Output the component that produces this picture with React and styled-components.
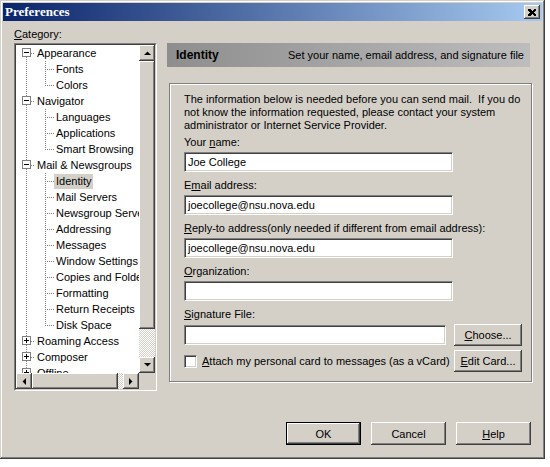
import React from "react";
import styled, { createGlobalStyle } from "styled-components";

const GlobalStyle = createGlobalStyle`
  html, body {
    margin: 0;
    padding: 0;
    background: #ffffff;
  }
  body {
    font-family: "Liberation Sans", Arial, sans-serif;
    font-size: 11px;
    color: #000000;
  }
`;

const treeItems = [
  { label: "Appearance", level: 0, open: true, first: true },
  { label: "Fonts", level: 1 },
  { label: "Colors", level: 1, last: true },
  { label: "Navigator", level: 0, open: true },
  { label: "Languages", level: 1 },
  { label: "Applications", level: 1 },
  { label: "Smart Browsing", level: 1, last: true },
  { label: "Mail & Newsgroups", level: 0, open: true },
  { label: "Identity", level: 1, selected: true },
  { label: "Mail Servers", level: 1 },
  { label: "Newsgroup Servers", level: 1 },
  { label: "Addressing", level: 1 },
  { label: "Messages", level: 1 },
  { label: "Window Settings", level: 1 },
  { label: "Copies and Folders", level: 1 },
  { label: "Formatting", level: 1 },
  { label: "Return Receipts", level: 1 },
  { label: "Disk Space", level: 1, last: true },
  { label: "Roaming Access", level: 0 },
  { label: "Composer", level: 0 },
  { label: "Offline", level: 0 },
];

const DOT = { stroke: "#808080", strokeDasharray: "1 1" };

const TreeGlyph = ({ level, first, last, open }) => {
  if (level) {
    return (
      <svg width={38} height={16} shapeRendering="crispEdges">
        <line x1={10.5} y1={0} x2={10.5} y2={16} {...DOT} />
        <line x1={29.5} y1={0} x2={29.5} y2={last ? 9 : 16} {...DOT} />
        <line x1={31} y1={8.5} x2={38} y2={8.5} {...DOT} />
      </svg>
    );
  }
  return (
    <svg width={19} height={16} shapeRendering="crispEdges">
      <line x1={10.5} y1={first ? 8 : 0} x2={10.5} y2={16} {...DOT} />
      <line x1={15} y1={8.5} x2={19} y2={8.5} {...DOT} />
      <rect x={6.5} y={3.5} width={8} height={8} fill="#fff" stroke="#808080" />
      <line x1={8} y1={7.5} x2={13} y2={7.5} stroke="#000" />
      {!open && <line x1={10.5} y1={5} x2={10.5} y2={10} stroke="#000" />}
    </svg>
  );
};

const Arrow = ({ dir }) => {
  const pts = {
    up: "0,4 7,4 3.5,0.5",
    down: "0,0 7,0 3.5,3.5",
    left: "4,0 4,7 0.5,3.5",
    right: "0,0 0,7 3.5,3.5",
  }[dir];
  const vertical = dir === "up" || dir === "down";
  return (
    <svg width={vertical ? 7 : 4} height={vertical ? 4 : 7}>
      <polygon points={pts} fill="#000" />
    </svg>
  );
};

const CloseGlyph = () => (
  <svg width={8} height={7} shapeRendering="crispEdges">
    <path d="M0 0h2l2 2 2-2h2v1l-2 2.5 2 2.5v1h-2l-2-2-2 2h-2v-1l2-2.5-2-2.5z" fill="#000" />
  </svg>
);

export default function App() {
  return (
    <>
      <GlobalStyle />
      <Window>
        <TitleBar>
          <Title>Preferences</Title>
          <CloseButton>
            <CloseGlyph />
          </CloseButton>
        </TitleBar>

        <Main>
          <LeftColumn>
            <Label>
              <u>C</u>ategory:
            </Label>
            <TreeBox>
              <TreeInner>
                <TreeList>
                  {treeItems.map((item) => (
                    <TreeRow key={item.label}>
                      <TreeGlyph {...item} />
                      <TreeText selected={item.selected}>{item.label}</TreeText>
                    </TreeRow>
                  ))}
                </TreeList>
                <VScroll>
                  <ScrollButton>
                    <Arrow dir="up" />
                  </ScrollButton>
                  <Thumb style={{ height: 268 }} />
                  <Track />
                  <ScrollButton>
                    <Arrow dir="down" />
                  </ScrollButton>
                </VScroll>
                <HScroll>
                  <ScrollButton>
                    <Arrow dir="left" />
                  </ScrollButton>
                  <Thumb style={{ width: 86 }} />
                  <Track />
                  <ScrollButton>
                    <Arrow dir="right" />
                  </ScrollButton>
                </HScroll>
                <Corner />
              </TreeInner>
            </TreeBox>
          </LeftColumn>

          <RightColumn>
            <PanelHeader>
              <PanelTitle>Identity</PanelTitle>
              <PanelSubtitle>Set your name, email address, and signature file</PanelSubtitle>
            </PanelHeader>

            <GroupBox>
              <Intro>
                The information below is needed before you can send mail.&nbsp; If you do
                <br />
                not know the information requested, please contact your system
                <br />
                administrator or Internet Service Provider.
              </Intro>

              <Field>
                <Label>
                  Your <u>n</u>ame:
                </Label>
                <TextBox>Joe College</TextBox>
              </Field>

              <Field>
                <Label>
                  E<u>m</u>ail address:
                </Label>
                <TextBox>joecollege@nsu.nova.edu</TextBox>
              </Field>

              <Field>
                <Label>
                  <u>R</u>eply-to address(only needed if different from email address):
                </Label>
                <TextBox>joecollege@nsu.nova.edu</TextBox>
              </Field>

              <Field>
                <Label>
                  <u>O</u>rganization:
                </Label>
                <TextBox />
              </Field>

              <Field>
                <Label>
                  <u>S</u>ignature File:
                </Label>
                <InlineRow>
                  <TextBox narrow />
                  <Button>
                    <u>C</u>hoose...
                  </Button>
                </InlineRow>
              </Field>

              <CheckRow>
                <CheckLabel>
                  <CheckBox />
                  <span>
                    <u>A</u>ttach my personal card to messages (as a vCard)
                  </span>
                </CheckLabel>
                <Button>
                  <u>E</u>dit Card...
                </Button>
              </CheckRow>
            </GroupBox>
          </RightColumn>
        </Main>

        <Footer>
          <Button wide isDefault>
            OK
          </Button>
          <Button wide>Cancel</Button>
          <Button wide>
            <u>H</u>elp
          </Button>
        </Footer>
      </Window>
    </>
  );
}

const raised = `
  background: #d4d0c8;
  box-shadow: inset -1px -1px 0 #404040, inset 1px 1px 0 #ffffff,
    inset -2px -2px 0 #808080, inset 2px 2px 0 #d4d0c8;
`;

const Window = styled.div`
  width: 545px;
  height: 459px;
  box-sizing: border-box;
  display: flex;
  flex-direction: column;
  background: #d4d0c8;
  box-shadow: inset -1px -1px 0 #404040, inset 1px 1px 0 #d4d0c8,
    inset -2px -2px 0 #808080, inset 2px 2px 0 #ffffff;
`;

const TitleBar = styled.div`
  height: 18px;
  margin: 3px 3px 0;
  display: flex;
  align-items: center;
  justify-content: space-between;
  padding: 0 2px 0 2px;
  background: linear-gradient(to right, #0a246a, #a6caf0);
`;

const Title = styled.span`
  color: #ffffff;
  font-family: "Liberation Serif", "Times New Roman", serif;
  font-weight: bold;
  font-size: 13px;
`;

const CloseButton = styled.div`
  ${raised}
  width: 16px;
  height: 14px;
  display: flex;
  align-items: center;
  justify-content: center;
`;

const Main = styled.div`
  display: flex;
  gap: 10px;
  padding: 7px 0 0 14px;
`;

const LeftColumn = styled.div`
  width: 143px;
  display: flex;
  flex-direction: column;
  gap: 2px;
`;

const Label = styled.div`
  line-height: 13px;
  white-space: nowrap;
`;

const TreeBox = styled.div`
  height: 348px;
  box-sizing: border-box;
  border: 1px solid;
  border-color: #808080 #ffffff #ffffff #808080;
`;

const TreeInner = styled.div`
  height: 100%;
  box-sizing: border-box;
  border: 1px solid;
  border-color: #404040 #d4d0c8 #d4d0c8 #404040;
  display: grid;
  grid-template-columns: 1fr 16px;
  grid-template-rows: 1fr 16px;
  background: #ffffff;
`;

const TreeList = styled.div`
  overflow: hidden;
`;

const TreeRow = styled.div`
  height: 16px;
  display: flex;
  align-items: center;
  white-space: nowrap;
  svg {
    flex: none;
  }
`;

const TreeText = styled.span`
  padding: 0 2px;
  line-height: 15px;
  background: ${(p) => (p.selected ? "#d4d0c8" : "transparent")};
`;

const checker = `
  background-color: #ffffff;
  background-image: repeating-conic-gradient(#d4d0c8 0% 25%, #ffffff 0% 50%);
  background-size: 2px 2px;
`;

const VScroll = styled.div`
  display: flex;
  flex-direction: column;
  ${checker}
`;

const HScroll = styled.div`
  display: flex;
  ${checker}
`;

const ScrollButton = styled.div`
  ${raised}
  flex: none;
  width: 16px;
  height: 16px;
  display: flex;
  align-items: center;
  justify-content: center;
`;

const Thumb = styled.div`
  ${raised}
  flex: none;
`;

const Track = styled.div`
  flex: 1;
`;

const Corner = styled.div`
  background: #d4d0c8;
`;

const RightColumn = styled.div`
  width: 363px;
  padding-top: 15px;
  display: flex;
  flex-direction: column;
`;

const PanelHeader = styled.div`
  height: 24px;
  display: flex;
  align-items: center;
  justify-content: space-between;
  padding: 0 6px 0 9px;
  background: linear-gradient(to right, #8e8e8e, #bdbdbd);
`;

const PanelTitle = styled.span`
  font-weight: bold;
  font-size: 12px;
`;

const PanelSubtitle = styled.span`
  font-size: 11px;
`;

const GroupBox = styled.div`
  margin: 16px 0 0 2px;
  width: 363px;
  height: 299px;
  box-sizing: border-box;
  border: 1px solid #808080;
  box-shadow: 1px 1px 0 #ffffff, inset 1px 1px 0 #ffffff;
  padding: 9px 0 0 14px;
  display: flex;
  flex-direction: column;
  gap: 7px;
`;

const Intro = styled.p`
  margin: 0 0 -3px;
  line-height: 13px;
  white-space: nowrap;
`;

const Field = styled.div`
  display: flex;
  flex-direction: column;
  gap: 3px;
`;

const TextBox = styled.div`
  width: ${(p) => (p.narrow ? "262px" : "269px")};
  height: 20px;
  box-sizing: border-box;
  padding: 0 3px;
  display: flex;
  align-items: center;
  background: #ffffff;
  border: 1px solid;
  border-color: #808080 #ffffff #ffffff #808080;
  box-shadow: inset 1px 1px 0 #404040, inset -1px -1px 0 #d4d0c8;
`;

const InlineRow = styled.div`
  width: 338px;
  display: flex;
  align-items: center;
  justify-content: space-between;
`;

const CheckRow = styled.div`
  width: 338px;
  margin-top: -3px;
  display: flex;
  align-items: center;
  justify-content: space-between;
`;

const CheckLabel = styled.label`
  display: flex;
  align-items: center;
  gap: 5px;
`;

const CheckBox = styled.span`
  width: 13px;
  height: 13px;
  box-sizing: border-box;
  background: #ffffff;
  border: 1px solid;
  border-color: #808080 #ffffff #ffffff #808080;
  box-shadow: inset 1px 1px 0 #404040, inset -1px -1px 0 #d4d0c8;
`;

const Button = styled.div`
  ${raised}
  width: ${(p) => (p.wide ? "75px" : "68px")};
  height: ${(p) => (p.wide ? "23px" : "22px")};
  box-sizing: border-box;
  display: flex;
  align-items: center;
  justify-content: center;
  ${(p) =>
    p.isDefault &&
    `
    box-shadow: inset 0 0 0 1px #000000, inset -2px -2px 0 #404040,
      inset 2px 2px 0 #ffffff, inset -3px -3px 0 #808080;
  `}
`;

const Footer = styled.div`
  margin-top: auto;
  display: flex;
  justify-content: flex-end;
  gap: 10px;
  padding: 0 14px 14px 0;
`;
